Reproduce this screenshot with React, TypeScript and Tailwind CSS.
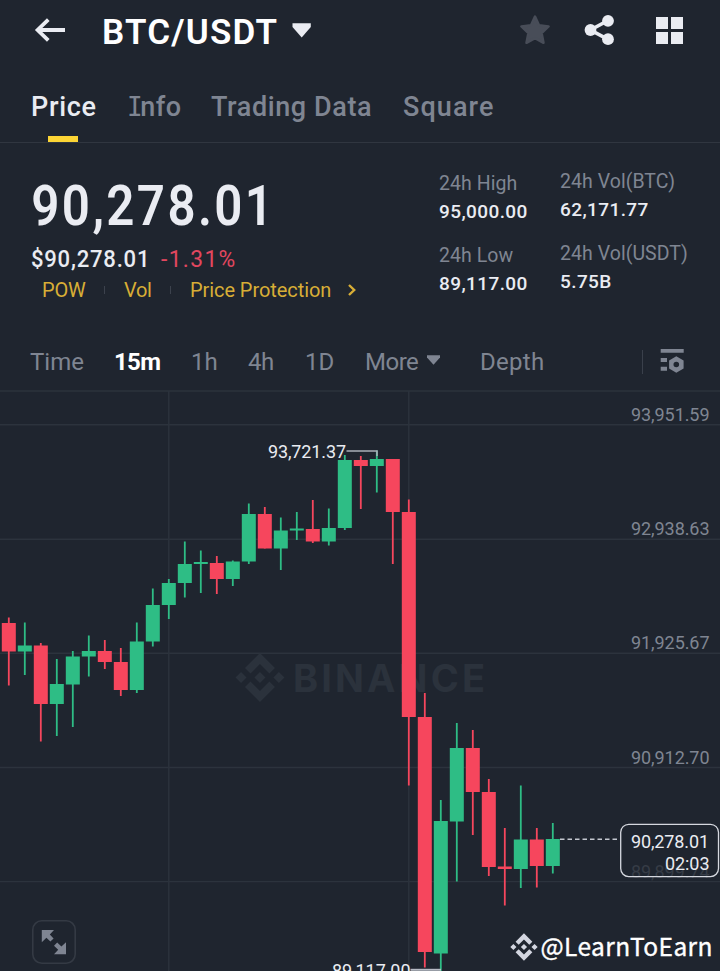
import clsx from "clsx";

type Candle = [high: number, top: number, bottom: number, low: number, up: 0 | 1];

const CANDLES: Candle[] = [
    [617.5, 623, 651.5, 685.5, 0],
    [622.5, 645.5, 651.5, 675, 1],
    [643, 645.5, 704, 741.5, 0],
    [659, 684, 704, 736, 1],
    [651, 656.5, 684.5, 727, 1],
    [635.5, 651, 656.5, 676.5, 1],
    [640, 651, 662, 669, 0],
    [648, 662, 690, 696, 0],
    [622.5, 641.5, 690, 693, 1],
    [588.5, 605, 641.5, 646.5, 1],
    [579, 583, 605, 619, 1],
    [541.5, 564, 583, 597.5, 1],
    [550.5, 562, 564, 593, 1],
    [556, 563, 579, 594, 0],
    [560.5, 561.5, 579, 586, 1],
    [503.5, 514, 561.5, 564, 1],
    [507, 514, 548.5, 548.5, 0],
    [517.5, 530.5, 548.5, 570, 1],
    [512, 528.5, 530.5, 540, 1],
    [500, 529, 541.5, 543, 0],
    [508.5, 528, 541.5, 545.5, 1],
    [455, 460, 528, 530, 1],
    [456, 460, 466, 509, 0],
    [450.5, 459, 466, 492.5, 1],
    [459, 459, 512, 564, 0],
    [499.5, 512, 717, 785.5, 0],
    [693, 717, 952, 967.5, 0],
    [800, 821, 953.5, 971, 1],
    [723, 748, 821.5, 881.5, 1],
    [730, 748, 792, 835, 0],
    [779, 792, 867, 876, 0],
    [828, 866.5, 869, 905.5, 0],
    [785.5, 839.5, 869, 888, 1],
    [828, 839.5, 866, 887.5, 0],
    [823, 839, 866, 873.5, 1],
];

const AXIS = [
    { label: "93,951.59", y: 421 },
    { label: "92,938.63", y: 535 },
    { label: "91,925.67", y: 649 },
    { label: "90,912.70", y: 764 },
    { label: "89,899.74", y: 878, faded: true },
];

const LOGO =
    "M16.624 13.9202l2.7175 2.7154-7.353 7.353-7.353-7.352 2.7175-2.7164 4.6355 4.6595 4.6356-4.6595zm4.6366-4.6366L24 12l-2.7154 2.7164L18.5682 12l2.6924-2.7164zm-9.272.001l2.7163 2.6914-2.7164 2.7174v-.001L9.2721 12l2.7164-2.7154zm-9.2722-.001L5.4088 12l-2.6914 2.6924L0 12l2.7164-2.7164zM11.9885.0115l7.353 7.329-2.7174 2.7154-4.6356-4.6356-4.6355 4.6595-2.7174-2.7154 7.353-7.353z";

function Header() {
    return (
        <header className="flex h-[63px] items-center pl-[34px]">
            <svg className="mb-[3px] h-6 w-8" viewBox="0 0 32 24" fill="none" stroke="#eaecf2" strokeWidth="3.8">
                <path d="M31 12H4M14.3 1.6L3.6 12l10.7 10.4" />
            </svg>
            <h1 className="ml-[36px] w-[190px] pt-[2px] text-[35px] leading-[40px] font-semibold tracking-[1.2px] text-white">
                BTC/USDT
            </h1>
            <svg className="mb-[3px] h-[15px] w-[19px]" viewBox="0 0 19 15" fill="#eaecf2">
                <path d="M0.5 0.3H18.8V4L9.7 14.6 0.5 4Z" />
            </svg>
            <svg
                className="mb-[3px] ml-[208px] h-8 w-8"
                viewBox="0 0 32 32"
                fill="#484d58"
                stroke="#484d58"
                strokeWidth="2.5"
                strokeLinejoin="round"
            >
                <path d="M16 2.6L20 11.2L29.6 12.4L22.6 19L24.5 28.8L16 24.2L7.5 28.8L9.4 19L2.4 12.4L12 11.2Z" />
            </svg>
            <svg className="mb-[3px] ml-[33px] h-8 w-8" viewBox="0 0 32 32" fill="#eaecf2">
                <path d="M24 6.5L6.5 16L24 25.3" fill="none" stroke="#eaecf2" strokeWidth="3.6" />
                <circle cx="24" cy="6.8" r="5.9" />
                <circle cx="6.5" cy="16" r="5.9" />
                <circle cx="24" cy="25.2" r="5.9" />
            </svg>
            <div className="mb-[3px] ml-[40px] grid grid-cols-2 gap-[3px]">
                <span className="size-3 bg-[#eaecf2]" />
                <span className="size-3 bg-[#eaecf2]" />
                <span className="size-3 bg-[#eaecf2]" />
                <span className="size-3 bg-[#eaecf2]" />
            </div>
        </header>
    );
}

function Tabs() {
    return (
        <nav className="flex h-[80px] border-b border-[#303640] pl-[31px] text-[27px] leading-[32px] font-medium text-[#7f8592]">
            <div className="relative w-[96px] pt-[28px] tracking-[0.7px] text-[#eaecf2]">
                Price
                <span className="absolute bottom-0 left-[17px] h-[6px] w-[30px] bg-[#fcd535]" />
            </div>
            <div className="w-[84px] pt-[28px] tracking-[0.5px]">
                <span className="font-['DejaVu_Sans_Mono'] text-[26px] leading-none tracking-[-2.5px]">I</span>nfo
            </div>
            <div className="w-[192px] pt-[28px] tracking-[0.6px]">Trading Data</div>
            <div className="pt-[28px] tracking-[1.1px]">Square</div>
        </nav>
    );
}

function Stat({ label, value }: { label: string; value: string }) {
    return (
        <div>
            <p className="text-[19.5px] leading-[28px] tracking-[0.05px] text-[#7f8592]">{label}</p>
            <p className="text-[19px] leading-[28px] font-medium tracking-[0.4px] text-[#eaecf2]">{value}</p>
        </div>
    );
}

function Summary() {
    return (
        <section className="flex h-[190px]">
            <div className="w-[439px] pt-[33px] pl-[30px]">
                <p className="w-[260px] origin-left scale-x-[0.88] pl-[1.5px] text-[56px] leading-[61px] font-semibold tracking-[2.7px] text-[#eaecf2]">
                    90,278.01
                </p>
                <div className="mt-[6px] flex text-[24px] leading-[32px]">
                    <span className="w-[130px] origin-left scale-x-[0.92] pl-px font-medium tracking-[0.85px] text-[#eaecf2]">
                        $90,278.01
                    </span>
                    <span className="w-[90px] origin-left scale-x-[0.95] pl-px tracking-[1.45px] text-[#e2475f]">-1.31%</span>
                </div>
                <div className="mt-px flex items-center pl-3 text-[20px] leading-[28px] text-[#d8ae36]">
                    <span className="w-[62px] tracking-[-0.2px]">POW</span>
                    <span className="h-2 w-px bg-[#3c424d]" />
                    <span className="w-[65px] pl-[19px] tracking-[-0.3px]">Vol</span>
                    <span className="h-2 w-px bg-[#3c424d]" />
                    <span className="w-[177px] pl-[19px] tracking-[-0.07px] whitespace-nowrap">Price Protection</span>
                    <svg className="h-3 w-2" viewBox="0 0 8 12" fill="none" stroke="#d8ae36" strokeWidth="2.4">
                        <path d="M1 1L6.2 6L1 11" />
                    </svg>
                </div>
            </div>
            <div className="flex w-[121px] flex-col gap-4 pt-[27px]">
                <Stat label="24h High" value="95,000.00" />
                <Stat label="24h Low" value="89,117.00" />
            </div>
            <div className="flex flex-col gap-4 pt-[25px] whitespace-nowrap">
                <Stat label="24h Vol(BTC)" value="62,171.77" />
                <Stat label="24h Vol(USDT)" value="5.75B" />
            </div>
        </section>
    );
}

function Intervals() {
    return (
        <section className="flex h-[57px] items-center pl-[30px] text-[24px] leading-[32px] text-[#7f8592]">
            <span className="w-[84px]">Time</span>
            <span className="w-[77px] font-bold tracking-[-0.7px] text-white">15m</span>
            <span className="w-[57px]">1h</span>
            <span className="w-[57px] tracking-[-0.4px]">4h</span>
            <span className="w-[60px]">1D</span>
            <span className="w-[62px] tracking-[-0.5px]">More</span>
            <svg className="mb-1 h-[10px] w-[13px]" viewBox="0 0 13 10" fill="#7f8592">
                <path d="M0 0.3H13V2.4L6.5 9.7 0 2.4Z" />
            </svg>
            <span className="ml-[40px] w-[162px] tracking-[0.3px]">Depth</span>
            <span className="h-6 w-px bg-[#3a404b]" />
            <svg className="ml-[17px] h-[25px] w-6" viewBox="0 0 24 25" fill="#7f8592">
                <path d="M0.7 0h23v3.8h-23zM0.7 9H7v4H0.7zM0.7 17.8H7v4H0.7z" />
                <path
                    fillRule="evenodd"
                    d="M16.3 7.2l7.3 4.2v8.2l-7.3 4.2-7.2-4.2V11.4zM16.3 12.7a2.8 2.8 0 1 0 0 5.6a2.8 2.8 0 1 0 0-5.6z"
                />
            </svg>
        </section>
    );
}

function Chart() {
    return (
        <svg className="block h-[581px] w-[720px]" viewBox="0 390 720 581" fontSize="18">
            {/* grid */}
            <g stroke="#2c333d" strokeWidth="1.4">
                <path d="M0 391H720M0 424.8H720M0 539.2H720M0 653.3H720M0 767.5H720M0 881.6H720" />
                <path d="M168.8 391V971M408.8 391V971" />
            </g>

            {/* watermark */}
            <g fill="#2b323c">
                <path d={LOGO} transform="translate(235.5 653) scale(2.04)" />
                <text x="293" y="692" fontFamily="Inter, sans-serif" fontSize="38" fontWeight="700" textLength="192">
                    BINANCE
                </text>
            </g>

            {AXIS.map(({ label, y, faded }) => (
                <text key={label} x="631" y={y} textLength="78.5" fill={faded ? "#363c46" : "#7f8592"}>
                    {label}
                </text>
            ))}

            {CANDLES.map(([high, top, bottom, low, up], i) => {
                const x = 8.8 + i * 16;
                return (
                    <g key={i} className={clsx(up ? "fill-[#2ebd85]" : "fill-[#f6465d]")}>
                        <rect x={x - 0.9} y={high} width="1.8" height={low - high} />
                        <rect x={x - 7} y={top} width="14" height={bottom - top} />
                    </g>
                );
            })}

            {/* high / low markers */}
            <g fill="#eaecf2">
                <text x="268" y="458" textLength="78">93,721.37</text>
                <text x="332" y="976.5" textLength="78.5">89,117.00</text>
            </g>
            <path d="M346.5 451H377V456" fill="none" stroke="#a9aeb8" strokeWidth="1.6" />
            <path d="M410.5 969.8H441" stroke="#b7bbc5" strokeWidth="2" />

            {/* last price */}
            <path d="M560 839.2H620" stroke="#c4c8d0" strokeWidth="1.4" strokeDasharray="4.5 3" />
            <rect x="620.7" y="824.3" width="97.8" height="52.3" rx="8" fill="none" stroke="#d5d8df" strokeWidth="1.3" />
            <g fill="#eaecf2">
                <text x="631" y="848" textLength="78">90,278.01</text>
                <text x="665" y="870.3" textLength="44.5">02:03</text>
            </g>

            {/* fullscreen */}
            <rect x="32.8" y="920.8" width="42.4" height="42.4" rx="9" fill="none" stroke="#343a44" strokeWidth="1.6" />
            <g fill="#7f8592">
                <path d="M41.8 930H54L49.8 934.4L53.6 938.4L50.4 941.6L46.4 937.8L41.8 942.2Z" />
                <path d="M66 954.2H54L58.2 949.8L54 945.8L57.2 942.6L61.4 946.4L66 942.2Z" />
            </g>

            {/* author tag */}
            <path d={LOGO} transform="translate(510.3 933.3) scale(1.14)" fill="#d3d6e0" />
            <text
                x="540.5"
                y="956"
                fill="#ffffff"
                stroke="#ffffff"
                strokeWidth="0.35"
                fontFamily="'Noto Sans CJK SC', sans-serif"
                fontSize="24.5"
                textLength="172"
            >
                @LearnToEarn
            </text>
        </svg>
    );
}

export default function App() {
    return (
        <div className="h-[971px] w-[720px] overflow-hidden bg-[#1f252f] font-[Roboto,sans-serif]">
            <Header />
            <Tabs />
            <Summary />
            <Intervals />
            <Chart />
        </div>
    );
}
